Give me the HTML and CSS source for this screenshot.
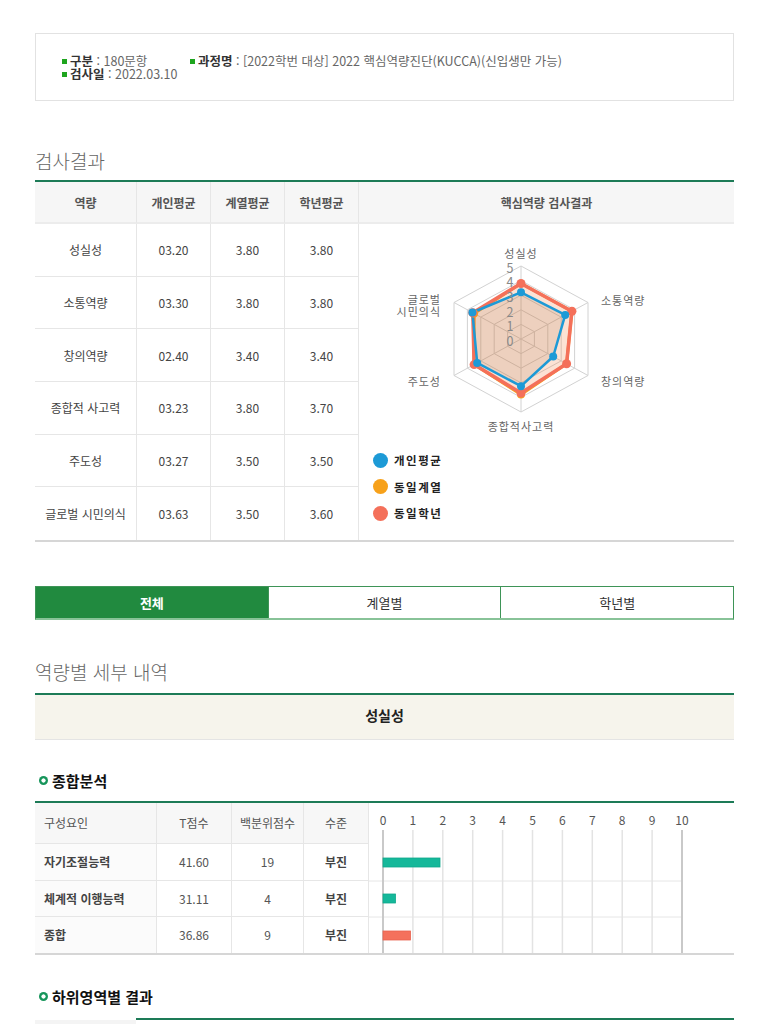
FILE: index.html
```html
<!DOCTYPE html>
<html lang="ko">
<head>
<meta charset="utf-8">
<title>핵심역량 검사결과</title>
<link rel="stylesheet" href="styles.css">
</head>
<body>
<div class="page">
  <div class="info-box">
    <ul class="info-list">
      <li><b>구분</b> : 180문항</li>
      <li><b>과정명</b> : [2022학번 대상] 2022 핵심역량진단(KUCCA)(신입생만 가능)</li>
      <li class="full"><b>검사일</b> : 2022.03.10</li>
    </ul>
  </div>

  <h2 class="sec-title">검사결과</h2>
  <div class="result">
    <div class="th">역량</div>
    <div class="th">개인평균</div>
    <div class="th">계열평균</div>
    <div class="th">학년평균</div>
    <div class="th th-last">핵심역량 검사결과</div>

    <div class="chart-cell">
      <svg class="radar" width="375" height="220" viewBox="0 0 375 220">
        <g fill="none" stroke="#d2d2d2" stroke-width="1">
          <polygon points="162,42 229,78.5 229,151.5 162,188 95,151.5 95,78.5"/>
          <polygon points="162,56.6 215.6,85.8 215.6,144.2 162,173.4 108.4,144.2 108.4,85.8"/>
          <polygon points="162,71.2 202.2,93.1 202.2,136.9 162,158.8 121.8,136.9 121.8,93.1"/>
          <polygon points="162,85.8 188.8,100.4 188.8,129.6 162,144.2 135.2,129.6 135.2,100.4"/>
          <polygon points="162,100.4 175.4,107.7 175.4,122.3 162,129.6 148.6,122.3 148.6,107.7"/>
          <line x1="162" y1="115" x2="162" y2="42"/>
          <line x1="162" y1="115" x2="229" y2="78.5"/>
          <line x1="162" y1="115" x2="229" y2="151.5"/>
          <line x1="162" y1="115" x2="162" y2="188"/>
          <line x1="162" y1="115" x2="95" y2="151.5"/>
          <line x1="162" y1="115" x2="95" y2="78.5"/>
        </g>
        <polygon points="162,59.5 212.9,87.3 207.6,139.8 162,170.5 115.1,140.6 115.1,89.4" fill="rgba(247,161,26,0.10)" stroke="#f7a11a" stroke-width="3" stroke-linejoin="round"/>
        <polygon points="162,59.5 212.9,87.3 207.6,139.8 162,169 115.1,140.6 113.8,88.7" fill="rgba(244,112,90,0.14)" stroke="#f4705a" stroke-width="3.5" stroke-linejoin="round"/>
        <polygon points="162,68.3 206.2,90.9 194.2,132.5 162,162.2 118.2,138.9 113.4,88.5" fill="rgba(140,90,50,0.13)" stroke="#1d9ad6" stroke-width="2.5" stroke-linejoin="round"/>
        <g fill="#f7a11a">
          <circle cx="162" cy="170.5" r="4"/><circle cx="115.1" cy="89.4" r="4"/>
        </g>
        <g fill="#f4705a">
          <circle cx="162" cy="59.5" r="4.5"/><circle cx="212.9" cy="87.3" r="4.5"/><circle cx="207.6" cy="139.8" r="4.5"/>
          <circle cx="162" cy="169" r="4.5"/><circle cx="115.1" cy="140.6" r="4.5"/><circle cx="113.8" cy="88.7" r="4.5"/>
        </g>
        <g fill="#1d9ad6">
          <circle cx="162" cy="68.3" r="4"/><circle cx="206.2" cy="90.9" r="4"/><circle cx="194.2" cy="132.5" r="4"/>
          <circle cx="162" cy="162.2" r="4"/><circle cx="118.2" cy="138.9" r="4"/><circle cx="113.4" cy="88.5" r="4"/>
        </g>
        <g class="ticks" text-anchor="middle">
          <text x="151" y="49">5</text>
          <text x="151" y="63">4</text>
          <text x="151" y="78">3</text>
          <text x="151" y="93">2</text>
          <text x="151" y="107">1</text>
          <text x="151" y="122">0</text>
        </g>
        <g class="axis">
          <text x="162" y="34" text-anchor="middle">성실성</text>
          <text x="242" y="81">소통역량</text>
          <text x="242" y="162">창의역량</text>
          <text x="162" y="207" text-anchor="middle">종합적사고력</text>
          <text x="82" y="162" text-anchor="end">주도성</text>
          <text x="82" y="80" text-anchor="end">글로벌</text>
          <text x="82" y="92" text-anchor="end">시민의식</text>
        </g>
      </svg>
      <ul class="legend">
        <li><span class="dot dot-blue"></span>개인평균</li>
        <li><span class="dot dot-orange"></span>동일계열</li>
        <li><span class="dot dot-red"></span>동일학년</li>
      </ul>
    </div>

    <div class="td">성실성</div><div class="td">03.20</div><div class="td">3.80</div><div class="td">3.80</div>
    <div class="td">소통역량</div><div class="td">03.30</div><div class="td">3.80</div><div class="td">3.80</div>
    <div class="td">창의역량</div><div class="td">02.40</div><div class="td">3.40</div><div class="td">3.40</div>
    <div class="td">종합적 사고력</div><div class="td">03.23</div><div class="td">3.80</div><div class="td">3.70</div>
    <div class="td">주도성</div><div class="td">03.27</div><div class="td">3.50</div><div class="td">3.50</div>
    <div class="td last">글로벌 시민의식</div><div class="td last">03.63</div><div class="td last">3.50</div><div class="td last">3.60</div>
  </div>

  <div class="tabs">
    <div class="tab active">전체</div>
    <div class="tab">계열별</div>
    <div class="tab">학년별</div>
  </div>

  <h2 class="sec-title sec-title-2">역량별 세부 내역</h2>
  <div class="band">성실성</div>

  <h3 class="sub-title">종합분석</h3>
  <div class="analysis">
    <div class="th2 left">구성요인</div>
    <div class="th2">T점수</div>
    <div class="th2">백분위점수</div>
    <div class="th2">수준</div>
    <div class="bar-cell">
      <svg width="365" height="150" viewBox="0 0 365 150">
        <g stroke="#e6e6e6" stroke-width="1">
          <line x1="0" y1="78" x2="313" y2="78"/>
          <line x1="0" y1="114" x2="313" y2="114"/>
        </g>
        <g stroke="#e3e3e3" stroke-width="1.5">
          <line x1="43.9" y1="27" x2="43.9" y2="150"/>
          <line x1="73.8" y1="27" x2="73.8" y2="150"/>
          <line x1="103.7" y1="27" x2="103.7" y2="150"/>
          <line x1="133.6" y1="27" x2="133.6" y2="150"/>
          <line x1="163.5" y1="27" x2="163.5" y2="150"/>
          <line x1="193.4" y1="27" x2="193.4" y2="150"/>
          <line x1="223.3" y1="27" x2="223.3" y2="150"/>
          <line x1="253.2" y1="27" x2="253.2" y2="150"/>
          <line x1="283.1" y1="27" x2="283.1" y2="150"/>
        </g>
        <g stroke="#c9c9c9" stroke-width="2">
          <line x1="14" y1="27" x2="14" y2="150"/>
          <line x1="313" y1="27" x2="313" y2="150"/>
        </g>
        <g class="scale" text-anchor="middle">
          <text x="14" y="22">0</text><text x="43.9" y="22">1</text><text x="73.8" y="22">2</text>
          <text x="103.7" y="22">3</text><text x="133.6" y="22">4</text><text x="163.5" y="22">5</text>
          <text x="193.4" y="22">6</text><text x="223.3" y="22">7</text><text x="253.2" y="22">8</text>
          <text x="283.1" y="22">9</text><text x="313" y="22">10</text>
        </g>
        <rect x="14" y="55" width="57" height="9" fill="#15b89a" stroke="#10a98c" stroke-width="0.8"/>
        <rect x="14" y="91" width="12.5" height="9" fill="#15b89a" stroke="#10a98c" stroke-width="0.8"/>
        <rect x="14" y="128" width="27.5" height="9" fill="#f4715c" stroke="#e9634f" stroke-width="0.8"/>
      </svg>
    </div>
    <div class="td2 left strong">자기조절능력</div><div class="td2">41.60</div><div class="td2">19</div><div class="td2 strong">부진</div>
    <div class="td2 left strong">체계적 이행능력</div><div class="td2">31.11</div><div class="td2">4</div><div class="td2 strong">부진</div>
    <div class="td2 left strong last">종합</div><div class="td2 last">36.86</div><div class="td2 last">9</div><div class="td2 strong last">부진</div>
  </div>

  <h3 class="sub-title sub-title-2">하위영역별 결과</h3>
  <div class="sub-table">
    <div class="sub-th"></div>
    <div class="sub-td"></div>
  </div>
</div>
</body>
</html>
```

FILE: styles.css
```css
* { box-sizing: border-box; margin: 0; padding: 0; }
html, body { background: #fff; }
body {
  font-family: "Noto Sans CJK KR", "Noto Sans", sans-serif;
  font-size: 12px;
  color: #555;
}
ul { list-style: none; }
.page { width: 768px; padding: 33px 34px 0 35px; }

/* info box */
.info-box { border: 1px solid #e2e2e2; padding: 20px 20px 20px 26px; }
.info-list {
  display: grid;
  grid-template-columns: 128px auto;
  justify-content: start;
  font-size: 12.5px;
  line-height: 13px;
  color: #666;
}
.info-list li { white-space: nowrap; }
.info-list li::before {
  content: "";
  display: inline-block;
  width: 5px; height: 5px;
  background: #1ea51e;
  margin-right: 3px;
  vertical-align: middle;
  position: relative; top: -1px;
}
.info-list b { color: #333; font-weight: 700; }
.info-list .full { grid-column: 1 / -1; }

/* section titles */
.sec-title {
  font-size: 19px;
  font-weight: 300;
  color: #666;
  line-height: 24px;
  margin: 48px 0 7px;
}
.sec-title-2 { margin: 40px 0 9px; }

/* result table */
.result {
  display: grid;
  grid-template-columns: 102px 74px 74px 74px 1fr;
  grid-template-rows: 42px repeat(6, 52.67px);
  border-top: 2px solid #1d7b57;
  border-bottom: 2px solid #d6d6d6;
}
.th {
  background: #f6f6f6;
  font-weight: 700;
  color: #555;
  display: flex; align-items: center; justify-content: center;
  border-right: 1px solid #e6e6e6;
  border-bottom: 2px solid #ececec;
}
.th-last { border-right: none; }
.td {
  display: flex; align-items: center; justify-content: center;
  border-right: 1px solid #e6e6e6;
  border-bottom: 1px solid #e6e6e6;
  color: #444;
}
.td.last { border-bottom: none; }
.chart-cell { grid-column: 5; grid-row: 2 / span 6; }
.radar { display: block; }
.ticks text { font-size: 12.5px; fill: #888; }
.axis text { font-size: 11px; fill: #666; letter-spacing: 1px; }
.legend { margin: 3px 0 0 14px; }
.legend li {
  height: 26.5px;
  display: flex; align-items: center;
  font-size: 11.5px;
  font-weight: 700;
  color: #222;
  letter-spacing: 1.5px;
}
.dot { width: 15px; height: 15px; border-radius: 50%; margin-right: 6px; }
.dot-blue { background: #1d9ad6; }
.dot-orange { background: #f7a11a; }
.dot-red { background: #f4705a; }

/* tabs */
.tabs {
  display: flex;
  margin-top: 44px;
  height: 34px;
  border: 1px solid #3e9457;
  border-bottom: 2px solid #88c398;
}
.tab {
  flex: 1;
  display: flex; align-items: center; justify-content: center;
  font-size: 13px;
  color: #333;
  border-left: 1px solid #3e9457;
}
.tab:first-child { border-left: none; }
.tab.active { background: #218a3f; color: #fff; font-weight: 700; }

/* band */
.band {
  height: 47px;
  background: #f6f4ec;
  border-top: 2px solid #1d7b57;
  border-bottom: 1px solid #e4e4e4;
  display: flex; align-items: center; justify-content: center;
  padding-bottom: 3px;
  font-size: 14px;
  font-weight: 700;
  color: #222;
}

/* sub titles */
.sub-title {
  font-size: 15px;
  font-weight: 700;
  color: #111;
  line-height: 20px;
  margin: 31px 0 10px;
  display: flex; align-items: center;
}
.sub-title::before {
  content: "";
  flex: none;
  width: 9px; height: 9px;
  border-radius: 50%;
  background: radial-gradient(circle, #fff 0 1.8px, #17955b 2.4px);
  margin: 0 4px 0 4px;
}
.sub-title-2 { margin: 32px 0 11px; }

/* analysis table */
.analysis {
  display: grid;
  grid-template-columns: 122px 75px 72px 65px 1fr;
  grid-template-rows: 41px 37px 36px 36px;
  border-top: 2px solid #1d7b57;
  border-bottom: 2px solid #d6d6d6;
}
.th2 {
  background: #f7f7f7;
  color: #555;
  display: flex; align-items: center; justify-content: center;
  border-right: 1px solid #e6e6e6;
  border-bottom: 1px solid #e6e6e6;
}
.td2 {
  display: flex; align-items: center; justify-content: center;
  border-right: 1px solid #e6e6e6;
  border-bottom: 1px solid #e6e6e6;
  color: #555;
}
.th2.left, .td2.left { justify-content: flex-start; padding-left: 9px; }
.td2.left { background: #fbfbfb; }
.td2.strong { font-weight: 700; color: #444; }
.td2.last { border-bottom: none; }
.bar-cell { grid-column: 5; grid-row: 1 / span 4; }
.bar-cell svg { display: block; }
.scale text { font-size: 12px; fill: #555; }

/* sub-area table */
.sub-table { display: grid; grid-template-columns: 101px 1fr; height: 40px; }
.sub-th { background: #f4f4f4; margin-top: 2px; }
.sub-td { border-top: 2px solid #1d7b57; }
```
